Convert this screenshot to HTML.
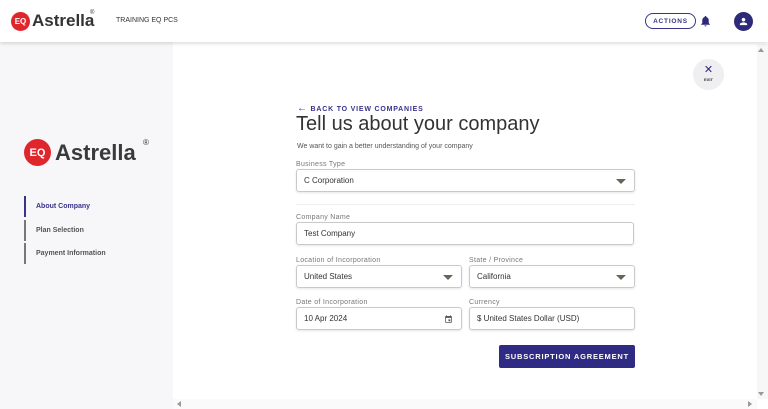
<!DOCTYPE html>
<html><head><meta charset="utf-8"><style>
*{box-sizing:border-box;margin:0;padding:0}
body{width:768px;height:409px;overflow:hidden;background:#fff;font-family:"Liberation Sans",sans-serif;position:relative;color:#333}
.hdr{position:absolute;left:0;top:0;width:768px;height:42px;background:#fff;box-shadow:0 2px 3px rgba(0,0,0,.12);z-index:2}
.eq{position:absolute;border-radius:50%;background:#e0262d;color:#fff;font-weight:bold;display:flex;align-items:center;justify-content:center}
.side{position:absolute;left:0;top:42px;width:173px;height:367px;background:#f7f6f8}
.abs{position:absolute}
.lbl{position:absolute;font-size:7px;color:#777;letter-spacing:.3px}
.fld{position:absolute;height:23px;border:1px solid #c9c9c9;border-radius:3px;font-size:8px;color:#333;padding-left:7px;line-height:21px;box-shadow:0 1px 2px rgba(0,0,0,.1)}
.tri{position:absolute;right:8px;top:9px;width:0;height:0;border-left:5px solid transparent;border-right:5px solid transparent;border-top:5px solid #6b6358}
.nav{position:absolute;left:24px;width:2px;height:21px;background:#777}
.navt{position:absolute;left:36px;font-size:7px;color:#555;font-weight:bold}
</style></head><body>
<div class="hdr">
 <div class="eq" style="left:11px;top:12px;width:19px;height:19px;font-size:8px">EQ</div>
 <div class="abs" style="left:32px;top:11px;font-size:17px;font-weight:bold;color:#333">Astrella</div>
 <div class="abs" style="left:90px;top:10px;font-size:6px;color:#333">®</div>
 <div class="abs" style="left:116px;top:17px;font-size:7px;color:#333">TRAINING EQ PCS</div>
 <div class="abs" style="left:645px;top:13px;width:51px;height:16px;border:1px solid #39338a;border-radius:9px;font-size:6.5px;font-weight:bold;color:#39338a;display:flex;align-items:center;justify-content:center;letter-spacing:.8px">ACTIONS</div>
 <svg class="abs" style="left:699px;top:14px" width="13" height="14" viewBox="0 0 24 24"><path fill="#2d2a7a" d="M12 22c1.1 0 2-.9 2-2h-4c0 1.1.9 2 2 2zm6-6v-5c0-3.1-1.6-5.6-4.5-6.3V4c0-.8-.7-1.5-1.5-1.5s-1.5.7-1.5 1.5v.7C7.6 5.4 6 7.9 6 11v5l-2 2v1h16v-1l-2-2z"/></svg>
 <div class="abs" style="left:734px;top:12px;width:19px;height:19px;border-radius:50%;background:#2d2a7a"></div>
 <svg class="abs" style="left:738px;top:16px" width="11" height="11" viewBox="0 0 24 24"><path fill="#fff" d="M12 12c2.2 0 4-1.8 4-4s-1.8-4-4-4-4 1.8-4 4 1.8 4 4 4zm0 2c-2.7 0-8 1.3-8 4v2h16v-2c0-2.7-5.3-4-8-4z"/></svg>
</div>
<div class="side">
 <div class="eq" style="left:24px;top:97px;width:27px;height:27px;font-size:11px">EQ</div>
 <div class="abs" style="left:55px;top:98px;font-size:22px;font-weight:bold;color:#3a3a3a">Astrella</div>
 <div class="abs" style="left:143px;top:96px;font-size:8px;color:#333">®</div>
 <div class="nav" style="top:154px;background:#39338a"></div><div class="navt" style="top:161px;color:#39338a">About Company</div>
 <div class="nav" style="top:178px"></div><div class="navt" style="top:185px">Plan Selection</div>
 <div class="nav" style="top:201px"></div><div class="navt" style="top:208px">Payment Information</div>
</div>
<div class="abs" style="left:693px;top:59px;width:31px;height:31px;border-radius:50%;background:#efeef0;text-align:center">
 <div style="font-size:11px;color:#2d2a7a;line-height:13px;margin-top:5px">✕</div>
 <div style="font-size:4px;font-weight:bold;color:#333">EXIT</div>
</div>
<div class="abs" style="left:297px;top:103px;font-size:7px;font-weight:bold;color:#39338a;letter-spacing:.8px"><span style="font-size:10px;font-weight:normal">←</span> BACK TO VIEW COMPANIES</div>
<div class="abs" style="left:296px;top:113px;font-size:20px;color:#333">Tell us about your company</div>
<div class="abs" style="left:297px;top:143px;font-size:7px;color:#555">We want to gain a better understanding of your company</div>
<div class="lbl" style="left:296px;top:161px">Business Type</div>
<div class="fld" style="left:296px;top:169px;width:339px">C Corporation<div class="tri"></div></div>
<div class="abs" style="left:296px;top:204px;width:339px;height:1px;background:#eee"></div>
<div class="lbl" style="left:296px;top:214px">Company Name</div>
<div class="fld" style="left:296px;top:222px;width:338px">Test Company</div>
<div class="lbl" style="left:296px;top:257px">Location of Incorporation</div>
<div class="fld" style="left:296px;top:265px;width:166px">United States<div class="tri"></div></div>
<div class="lbl" style="left:469px;top:257px">State / Province</div>
<div class="fld" style="left:469px;top:265px;width:166px">California<div class="tri"></div></div>
<div class="lbl" style="left:296px;top:299px">Date of Incorporation</div>
<div class="fld" style="left:296px;top:307px;width:166px">10 Apr 2024
 <svg style="position:absolute;right:8px;top:6px" width="9" height="10" viewBox="0 0 24 24"><path fill="#555" d="M19 4h-1V2h-2v2H8V2H6v2H5a2 2 0 0 0-2 2v14a2 2 0 0 0 2 2h14a2 2 0 0 0 2-2V6a2 2 0 0 0-2-2zm0 16H5V9h14v11zm-7-7h5v5h-5z"/></svg></div>
<div class="lbl" style="left:469px;top:299px">Currency</div>
<div class="fld" style="left:469px;top:307px;width:166px">$ United States Dollar (USD)</div>
<div class="abs" style="left:499px;top:345px;width:136px;height:23px;background:#2f2a84;border-radius:2px;color:#fff;font-size:7.5px;font-weight:bold;letter-spacing:.8px;text-align:center;line-height:23px">SUBSCRIPTION AGREEMENT</div>
<div class="abs" style="left:757px;top:44px;width:11px;height:355px;background:#f7f7f7"></div>
<div class="abs" style="left:758px;top:48px;width:0;height:0;border-left:3px solid transparent;border-right:3px solid transparent;border-bottom:4px solid #999"></div>
<div class="abs" style="left:758px;top:392px;width:0;height:0;border-left:3px solid transparent;border-right:3px solid transparent;border-top:4px solid #999"></div>
<div class="abs" style="left:173px;top:399px;width:584px;height:10px;background:#fafafa"></div>
<div class="abs" style="left:177px;top:401px;width:0;height:0;border-top:3px solid transparent;border-bottom:3px solid transparent;border-right:4px solid #999"></div>
<div class="abs" style="left:748px;top:401px;width:0;height:0;border-top:3px solid transparent;border-bottom:3px solid transparent;border-left:4px solid #999"></div>
</body></html>
